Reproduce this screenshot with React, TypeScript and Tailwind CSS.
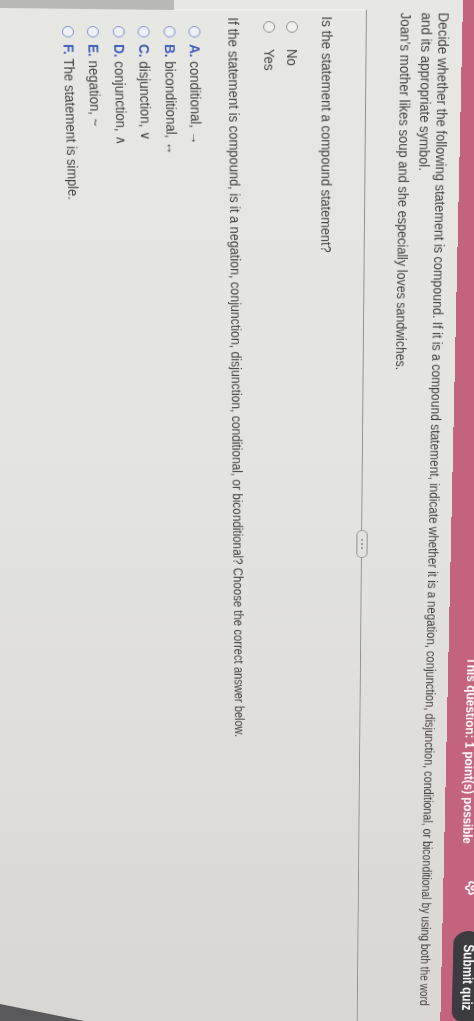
import { Settings } from "lucide-react";

function Radio({ blue }: { blue?: boolean }) {
  return (
    <span
      className={
        blue
          ? "w-[12px] h-[12px] rounded-full border-[1.5px] border-[#7f90c6] bg-[#eef0f4] shrink-0"
          : "w-[12px] h-[12px] rounded-full border-[1.5px] border-[#8d8d8d] bg-[#efefed] shrink-0"
      }
    />
  );
}

const options: [string, string][] = [
  ["A.", "conditional, \u2192"],
  ["B.", "biconditional, \u2194"],
  ["C.", "disjunction, \u2228"],
  ["D.", "conjunction, \u2227"],
  ["E.", "negation, ~"],
  ["F.", "The statement is simple."],
];

export default function App() {
  return (
    <div className="w-[474px] h-[1021px] overflow-hidden bg-[#e2e2df]">
      <div className="relative w-[1021px] h-[474px] overflow-hidden origin-top-left rotate-90 translate-x-[474px] bg-gradient-to-r from-[#e7e7e4] via-[#e3e3e0] to-[#d9d7d3]">
        <div className="-mt-[49px] w-[1270px] h-[640px] [transform-origin:0px_224px] [transform:perspective(1978px)_rotateY(15deg)] flex flex-col font-['Liberation_Sans',Arial,sans-serif] text-[14px] leading-[16px] text-[#434343]">
          <div className="h-[60px] shrink-0 bg-[#c4637e] flex items-center">
            <div className="ml-[747px] self-end mb-[18px] font-bold text-white text-[15px] leading-[16px] whitespace-nowrap">
              This question: 1 point(s) possible
            </div>
            <Settings className="ml-[48px] mb-[10px] w-[22px] h-[22px] text-white" strokeWidth={2.2} />
            <div className="ml-[47px] h-[34px] px-[18px] rounded-full bg-[#3c3b3f] text-white font-bold text-[16px] flex items-center whitespace-nowrap">
              Submit quiz
            </div>
          </div>

          <div className="pt-[10.5px] pl-[13px] whitespace-nowrap">
            <p className="leading-[17px]">
              Decide whether the following statement is compound. If it is a compound statement, indicate whether it is a negation, conjunction, disjunction, conditional, or biconditional by using both the word
              <br />
              and its appropriate symbol.
            </p>
            <p className="mt-[4px]">Joan{"\u2019"}s mother likes soup and she especially loves sandwiches.</p>
          </div>

          <div className="mt-[25.5px] ml-[10px] h-[12px] flex items-center">
            <div className="w-[581px] h-px bg-[#8f8f8f]" />
            <div className="w-[34px] h-[12px] rounded-full border border-[#8a8a8a] flex items-center justify-center gap-[3px]">
              <span className="w-[2px] h-[2px] rounded-full bg-[#777]" />
              <span className="w-[2px] h-[2px] rounded-full bg-[#777]" />
              <span className="w-[2px] h-[2px] rounded-full bg-[#777]" />
            </div>
            <div className="flex-1 h-px bg-[#8f8f8f]" />
          </div>

          <p className="mt-[26px] pl-[17px] whitespace-nowrap">Is the statement a compound statement?</p>

          <div className="mt-[19px] pl-[22px] flex flex-col gap-[7px]">
            <div className="h-[16px] flex items-center">
              <Radio />
              <span className="ml-[17px]">No</span>
            </div>
            <div className="h-[16px] flex items-center">
              <Radio />
              <span className="ml-[17px]">Yes</span>
            </div>
          </div>

          <p className="mt-[20px] pl-[18px] whitespace-nowrap">
            If the statement is compound, is it a negation, conjunction, disjunction, conditional, or biconditional? Choose the correct answer below.
          </p>

          <div className="mt-[23px] pl-[27px] flex flex-col gap-[9.4px]">
            {options.map(([l, t]) => (
              <div key={l} className="h-[16px] flex items-center whitespace-nowrap">
                <Radio blue />
                <span className="ml-[7px] font-bold text-[#3e5db6]">{l}</span>
                <span className="ml-[4px]">{t}</span>
              </div>
            ))}
          </div>
        </div>

        <svg className="absolute inset-0 pointer-events-none" width="1021" height="474" viewBox="0 0 1021 474">
          <polygon points="0,300 10,300 8,474 0,474" fill="#b9b9b6" />
          <line x1="10" y1="108" x2="10" y2="300" stroke="#f2f2f0" strokeWidth="1.5" />
          <polygon points="1021,390 1021,474 1004,474" fill="#59595b" />
        </svg>
      </div>
    </div>
  );
}
